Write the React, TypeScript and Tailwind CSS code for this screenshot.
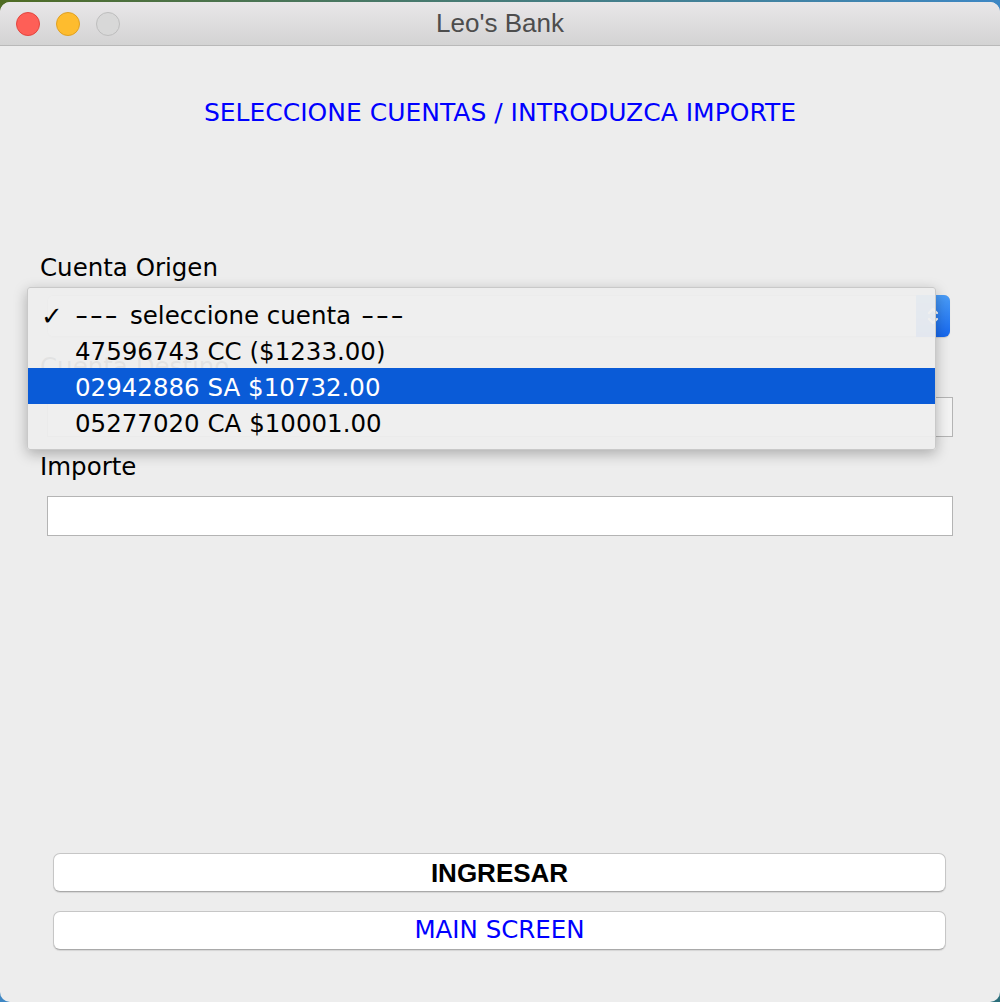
const ui = "'DejaVu Sans', 'Liberation Sans', sans-serif";

const accounts = [
  { label: 'seleccione cuenta', checked: true, dashed: true },
  { label: '47596743 CC ($1233.00)' },
  { label: '02942886 SA $10732.00', selected: true },
  { label: '05277020 CA $10001.00' },
];

function TrafficLights() {
  return (
    <div className="flex items-center gap-[16px] pl-[16px]">
      <span className="w-[24px] h-[24px] rounded-full bg-[#fe5f57] border border-[#e2463f]" />
      <span className="w-[24px] h-[24px] rounded-full bg-[#febc2e] border border-[#dfa023]" />
      <span className="w-[24px] h-[24px] rounded-full bg-[#d8d8d8] border border-[#bdbdbd]" />
    </div>
  );
}

function Label({ children }: { children: React.ReactNode }) {
  return (
    <div className="text-[24.5px] leading-[30px] text-black" style={{ fontFamily: ui }}>
      {children}
    </div>
  );
}

function Dashes() {
  return (
    <span className="inline-block w-[45px]">
      <span className="inline-block tracking-[1px] scale-x-150 origin-left">---</span>
    </span>
  );
}

function ComboBox() {
  return (
    <div className="ml-[7px] mr-[10px] h-[42px] mt-[12px] flex rounded-[6px] bg-white border border-[#c4c4c4] shadow-[0_1px_1px_rgba(0,0,0,0.12)]">
      <div className="flex-1" />
      <div className="w-[34px] -my-px -mr-px rounded-r-[6px] bg-gradient-to-b from-[#4a9cf7] to-[#1667ee] flex items-center justify-center">
        <svg width="14" height="24" viewBox="0 0 14 24" fill="none" stroke="white" strokeWidth="2.2" strokeLinecap="round" strokeLinejoin="round">
          <path d="M3 9 L7 5 L11 9" />
          <path d="M3 15 L7 19 L11 15" />
        </svg>
      </div>
    </div>
  );
}

function Popup() {
  return (
    <div className="absolute left-[27px] top-[285px] w-[909px] pt-[8px] pb-[9px] bg-[#eeeeee]/95 border border-[#c9c9c9] rounded-[3px] shadow-[0_4px_14px_rgba(0,0,0,0.28)]">
      {accounts.map((a) => (
        <div
          key={a.label}
          className={
            'h-[36px] flex items-center pl-[13px] pt-[4px] text-[24.5px] ' +
            (a.selected ? 'bg-[#0a5bd7] text-white' : 'text-black')
          }
          style={{ fontFamily: ui }}
        >
          <span className="w-[34px] font-bold text-[26px]">{a.checked ? '✓' : ''}</span>
          {a.dashed ? (
            <span className="flex items-center">
              <Dashes />
              <span className="mx-[10px]">{a.label}</span>
              <Dashes />
            </span>
          ) : (
            <span>{a.label}</span>
          )}
        </div>
      ))}
    </div>
  );
}

export default function App() {
  return (
    <div className="w-[1000px] h-[1002px] bg-gradient-to-br from-[#4f6b22] via-[#3e87c4] to-[#2b6e7a] pt-[2px]">
      <div className="relative h-[1000px] flex flex-col bg-[#ededed] rounded-[10px] overflow-hidden">
        <div className="h-[44px] shrink-0 relative flex items-center bg-gradient-to-b from-[#e9e7e9] to-[#d3d3d3] border-b border-[#b9b9b9]">
          <TrafficLights />
          <div
            className="absolute inset-0 flex items-center justify-center text-[26px] text-[#4d4d4d]"
            style={{ fontFamily: "'Liberation Sans', Arial, sans-serif" }}
          >
            Leo's Bank
          </div>
        </div>

        <div className="flex-1 flex flex-col px-[40px]">
          <div
            className="mt-[52px] text-center text-[25px] leading-[30px] text-[#0000ff]"
            style={{ fontFamily: ui }}
          >
            SELECCIONE CUENTAS / INTRODUZCA IMPORTE
          </div>

          <div className="mt-[125px]">
            <Label>Cuenta Origen</Label>
          </div>
          <ComboBox />

          <div className="mt-[15px]">
            <Label>Cuenta Destino</Label>
          </div>
          <div className="mx-[7px] mt-[15px] h-[40px] bg-[#f3f3f3] border border-[#b4b4b4]" />

          <div className="mt-[15px]">
            <Label>Importe</Label>
          </div>
          <div className="mx-[7px] mt-[14px] h-[40px] bg-white border border-[#b4b4b4]" />

          <div className="flex-1" />

          <div className="flex flex-col gap-[19px] ml-[13px] mr-[14px] mb-[52px]">
            <button
              className="h-[39px] rounded-[7px] bg-white border border-[#c6c6c6] border-b-[#a9a9a9] shadow-[0_1px_1px_rgba(0,0,0,0.1)] text-[26px] font-bold text-black"
              style={{ fontFamily: "'Liberation Sans', Arial, sans-serif" }}
            >
              INGRESAR
            </button>
            <button
              className="h-[39px] rounded-[7px] bg-white border border-[#c6c6c6] border-b-[#a9a9a9] shadow-[0_1px_1px_rgba(0,0,0,0.1)] text-[24.5px] text-[#0000ff]"
              style={{ fontFamily: ui }}
            >
              MAIN SCREEN
            </button>
          </div>
        </div>

        <Popup />
      </div>
    </div>
  );
}
